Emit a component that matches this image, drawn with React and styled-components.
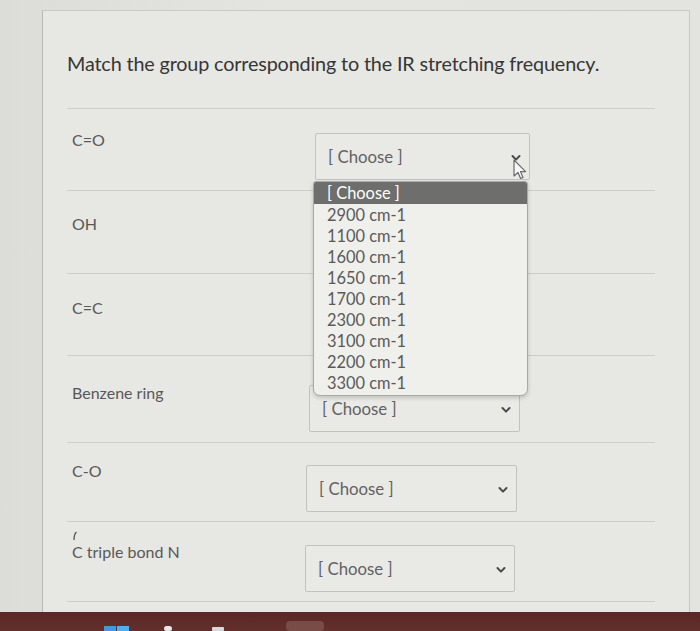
import React from "react";
import styled, { createGlobalStyle } from "styled-components";

const GlobalStyle = createGlobalStyle`
  html, body {
    margin: 0;
    padding: 0;
    background: #e1e1dd;
    font-family: Lato, "Open Sans", "Liberation Sans", sans-serif;
    overflow: hidden;
  }
  #root { height: 631px; }
`;

const Screen = styled.div`
  height: 631px;
  display: flex;
  flex-direction: column;
  background: linear-gradient(90deg, #dcdcd8 0%, #e4e4e0 40%, #e3e3df 100%);
`;

const Main = styled.div`
  flex: 1;
  display: flex;
  padding-left: 42px;
  min-height: 0;
`;

const Panel = styled.section`
  flex: 1;
  margin-top: 10px;
  border-left: 1px solid #b8b8b4;
  border-top: 1px solid #c9c9c5;
  background: #e7e7e3;
  padding: 0 24px 0 24px;
  margin-right: 10px;
  border-right: 1px solid #c6c6c2;
`;

const Title = styled.h2`
  margin: 40px 0 0 0;
  font-size: 19.8px;
  font-weight: 400;
  line-height: 24px;
  color: #363636;
  letter-spacing: -0.15px;
  height: 57px;
  white-space: nowrap;
`;

const RowList = styled.div`
  margin-right: 10px;
  border-bottom: 1px solid #cdcdc9;
`;

const Row = styled.div`
  position: relative;
  box-sizing: border-box;
  display: grid;
  grid-template-columns: 243px 222px;
  align-items: start;
  height: ${(p) => p.$h}px;
  border-top: 1px solid #cdcdc9;
`;

const Label = styled.div`
  padding: ${(p) => p.$top}px 0 0 5px;
  font-size: 16px;
  line-height: 18px;
  color: #585858;
`;

const Tick = styled.svg`
  display: block;
  margin: -14px 0 2px 0;
`;

const SelectWrap = styled.div`
  position: relative;
  margin-top: ${(p) => p.$top}px;
  margin-left: ${(p) => p.$x}px;
  width: ${(p) => p.$w}px;
`;

const SelectBox = styled.div`
  box-sizing: border-box;
  height: 47px;
  display: flex;
  align-items: center;
  justify-content: space-between;
  padding: 0 8px 0 12px;
  border: 1px solid #c2c2be;
  border-radius: 2px;
  background: #e9e9e6;
  font-size: 16.8px;
  color: #626262;
`;

const Chevron = styled.svg`
  flex: none;
  margin-top: 2px;
`;

const ListBox = styled.ul`
  position: absolute;
  z-index: 5;
  top: 48px;
  left: -2px;
  width: 215px;
  margin: 0;
  padding: 0 0 2px 0;
  list-style: none;
  box-sizing: border-box;
  background: #efefec;
  border: 1px solid #a9a9a6;
  border-radius: 3px 3px 7px 7px;
  box-shadow: 0 2px 4px rgba(0, 0, 0, 0.18);
  overflow: hidden;
`;

const Option = styled.li`
  height: ${(p) => (p.$active ? 22 : 21)}px;
  line-height: ${(p) => (p.$active ? 22 : 21)}px;
  padding-left: 13px;
  font-size: 16.4px;
  color: ${(p) => (p.$active ? "#ffffff" : "#5a5a5a")};
  background: ${(p) => (p.$active ? "#6e6e6c" : "transparent")};
`;

const Cursor = styled.svg`
  position: absolute;
  right: 2px;
  top: 26px;
  z-index: 6;
`;

const Taskbar = styled.footer`
  height: 19px;
  flex: none;
  position: relative;
  display: flex;
  align-items: flex-end;
  padding-left: 104px;
  background: linear-gradient(180deg, #5a2826 0%, #642f2c 100%);
  overflow: hidden;
`;

const TaskIcon = styled.div`
  width: ${(p) => p.$w}px;
  height: ${(p) => p.$h}px;
  margin-left: ${(p) => p.$gap}px;
  background: ${(p) => p.$bg};
  border-radius: ${(p) => p.$r}px;
`;

const WinLogo = styled.svg`
  display: block;
  margin-bottom: -2px;
`;

const OPTIONS = [
  "2900 cm-1",
  "1100 cm-1",
  "1600 cm-1",
  "1650 cm-1",
  "1700 cm-1",
  "2300 cm-1",
  "3100 cm-1",
  "2200 cm-1",
  "3300 cm-1",
];

const ROWS = [
  { label: "C=O", h: 82, lt: 22, st: 24, x: 5, w: 215, open: true },
  { label: "OH", h: 83, lt: 24, hidden: true },
  { label: "C=C", h: 82, lt: 25, hidden: true },
  { label: "Benzene ring", h: 87, lt: 28, st: 29, x: -1, w: 211 },
  { label: "C-O", h: 79, lt: 19, st: 22, x: -4, w: 211 },
  { label: "C triple bond N", h: 80, lt: 23, st: 23, x: -5, w: 210, tick: true },
];

function ChevronDown() {
  return (
    <Chevron width="10" height="8" viewBox="0 0 10 8">
      <path d="M1.5 2 L5 5.6 L8.5 2" fill="none" stroke="#4a4a4a" strokeWidth="2" strokeLinecap="round" strokeLinejoin="round" />
    </Chevron>
  );
}

function Select({ row }) {
  return (
    <SelectWrap $top={row.st} $x={row.x} $w={row.w}>
      <SelectBox>
        <span>[ Choose ]</span>
        <ChevronDown />
      </SelectBox>
      {row.open && (
        <>
          <Cursor width="16" height="22" viewBox="0 0 16 22">
            <path d="M2 1 L2 17 L6 13.5 L8.6 19.5 L11 18.4 L8.5 12.6 L13.6 12.6 Z" fill="#f7f7f5" stroke="#6a6a6a" strokeWidth="1.2" strokeLinejoin="round" />
          </Cursor>
          <ListBox>
            <Option $active>[ Choose ]</Option>
            {OPTIONS.map((o) => (
              <Option key={o}>{o}</Option>
            ))}
          </ListBox>
        </>
      )}
    </SelectWrap>
  );
}

export default function App() {
  return (
    <>
      <GlobalStyle />
      <Screen>
        <Main>
          <Panel>
            <Title>Match the group corresponding to the IR stretching frequency.</Title>
            <RowList>
              {ROWS.map((row) => (
                <Row key={row.label} $h={row.h}>
                  <Label $top={row.lt}>
                    {row.tick && (
                      <Tick width="6" height="10" viewBox="0 0 6 10">
                        <path d="M4.5 1 Q2 3 2 9" fill="none" stroke="#555" strokeWidth="1.3" />
                      </Tick>
                    )}
                    {row.label}
                  </Label>
                  {!row.hidden && <Select row={row} />}
                </Row>
              ))}
            </RowList>
          </Panel>
        </Main>
        <Taskbar>
          <WinLogo width="26" height="8" viewBox="0 0 26 8">
            <rect x="0" y="1" width="12" height="8" fill="#3d9be0" />
            <rect x="13" y="1" width="12" height="8" fill="#4fb0ee" />
          </WinLogo>
          <TaskIcon $w={8} $h={5} $gap={34} $bg="#e8e8e8" $r={4} />
          <TaskIcon $w={12} $h={4} $gap={40} $bg="#d8d8d8" $r={1} />
          <TaskIcon $w={38} $h={10} $gap={62} $bg="#7a4c48" $r={4} />
        </Taskbar>
      </Screen>
    </>
  );
}
